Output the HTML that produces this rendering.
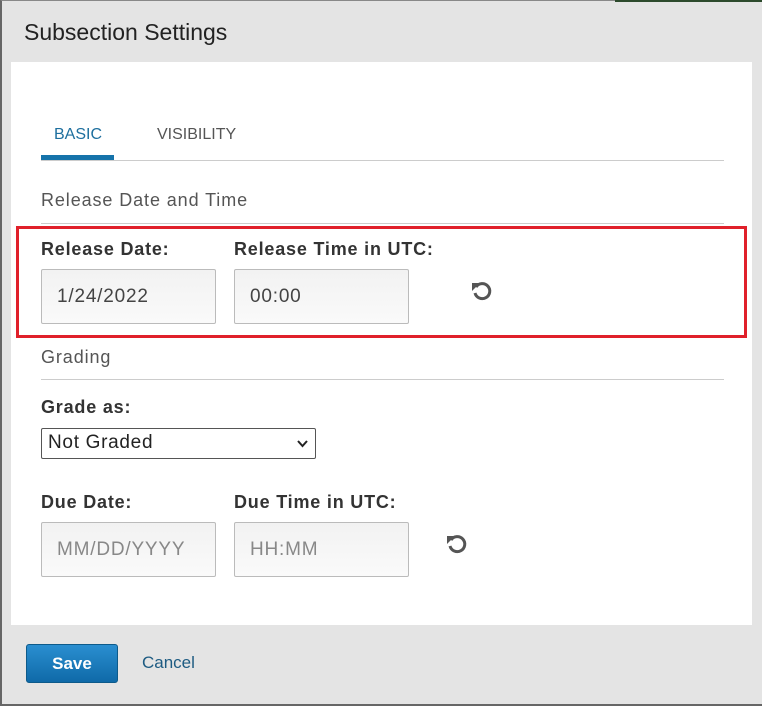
<!DOCTYPE html>
<html><head><meta charset="utf-8"><style>
*{box-sizing:border-box;margin:0;padding:0}
body{width:762px;height:706px;background:#e4e4e4;font-family:"Liberation Sans",sans-serif;position:relative;overflow:hidden}
.frame{position:absolute;left:0;top:0;width:762px;height:706px;border-left:2px solid #666;border-bottom:2px solid #666;border-top:1px solid #888}
.topline{position:absolute;left:615px;top:0;width:147px;height:2px;background:#2c4a2c}
.title{position:absolute;left:24px;top:19px;font-size:23px;color:#222;letter-spacing:0px}
.panel{position:absolute;left:11px;top:62px;width:741px;height:563px;background:#fff}
.abs{position:absolute}
.tab{font-size:16px;color:#555}
.sec{font-size:18px;color:#555;letter-spacing:0.9px}
.hr{position:absolute;left:41px;width:683px;height:1px;background:#ccc}
.lbl{font-size:18px;font-weight:bold;color:#333;letter-spacing:0.8px}
.inp{position:absolute;height:55px;border:1px solid #bbb;border-radius:2px;background:linear-gradient(#f2f2f2,#fafafa);font-size:19px;color:#444;padding:16px 0 0 15px;letter-spacing:0.8px}
.ph{color:#888}
.red{position:absolute;left:16px;top:226px;width:731px;height:112px;border:3px solid #e0202a}
.sel{position:absolute;left:41px;top:428px;width:275px;height:31px;border:1px solid #555;border-radius:2px;font-size:19px;color:#222;padding:3px 0 0 6px;background:#fff;letter-spacing:0.7px}
.save{position:absolute;left:26px;top:644px;width:92px;height:39px;border:1px solid #0d5a8a;border-radius:3px;background:linear-gradient(#2a8ed0,#0f6aa8);color:#fff;font-weight:bold;font-size:17px;text-align:center;line-height:37px}
</style></head><body>
<div class="frame"></div><div class="topline"></div>
<div class="title">Subsection Settings</div>
<div class="panel"></div>
<div class="abs tab" style="left:54px;top:126px;color:#1e6f9e">BASIC</div>
<div class="abs tab" style="left:157px;top:126px">VISIBILITY</div>
<div class="hr" style="top:160px"></div>
<div class="abs" style="left:41px;top:155px;width:73px;height:5px;background:#1573aa"></div>
<div class="abs sec" style="left:41px;top:190px">Release Date and Time</div>
<div class="hr" style="top:223px"></div>
<div class="abs lbl" style="left:41px;top:239px">Release Date:</div>
<div class="abs lbl" style="left:234px;top:239px">Release Time in UTC:</div>
<div class="inp" style="left:41px;top:269px;width:175px">1/24/2022</div>
<div class="inp" style="left:234px;top:269px;width:175px">00:00</div>
<svg class="abs" style="left:471px;top:280px" width="22" height="22" viewBox="0 0 22 22"><path d="M5 7 A7.5 7.5 0 1 1 4 13" fill="none" stroke="#555" stroke-width="3"/><path d="M1 3 L9 3 L1 11 Z" fill="#555"/></svg>
<div class="red"></div>
<div class="abs sec" style="left:41px;top:347px">Grading</div>
<div class="hr" style="top:379px"></div>
<div class="abs lbl" style="left:41px;top:397px">Grade as:</div>
<div class="sel">Not Graded<svg class="abs" style="left:255px;top:11px" width="11" height="8" viewBox="0 0 11 8"><path d="M1 1 L5.5 6 L10 1" fill="none" stroke="#222" stroke-width="2"/></svg></div>
<div class="abs lbl" style="left:41px;top:492px">Due Date:</div>
<div class="abs lbl" style="left:234px;top:492px">Due Time in UTC:</div>
<div class="inp ph" style="left:41px;top:522px;width:175px">MM/DD/YYYY</div>
<div class="inp ph" style="left:234px;top:522px;width:175px">HH:MM</div>
<svg class="abs" style="left:446px;top:533px" width="22" height="22" viewBox="0 0 22 22"><path d="M5 7 A7.5 7.5 0 1 1 4 13" fill="none" stroke="#555" stroke-width="3"/><path d="M1 3 L9 3 L1 11 Z" fill="#555"/></svg>
<div class="save">Save</div>
<div class="abs" style="left:142px;top:653px;font-size:17px;color:#1d5b82">Cancel</div>
</body></html>
